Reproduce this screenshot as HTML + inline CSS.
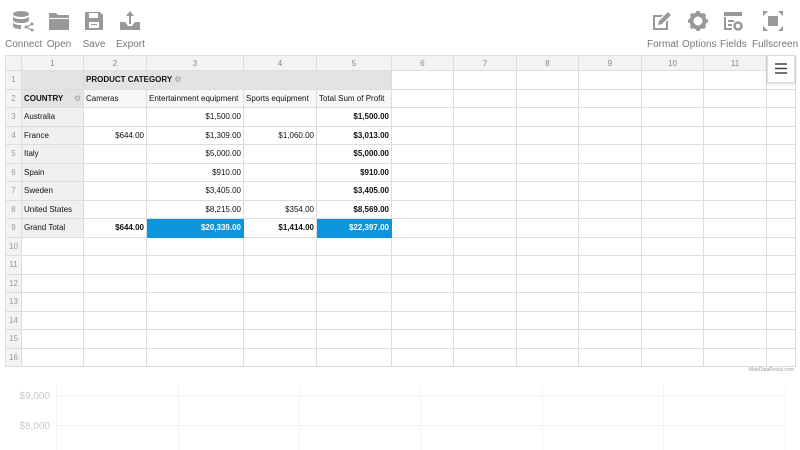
<!DOCTYPE html>
<html><head><meta charset="utf-8"><style>
*{box-sizing:border-box;margin:0;padding:0}
body{width:800px;height:450px;background:#fff;font-family:"Liberation Sans",Arial,sans-serif;position:relative;overflow:hidden;color:#111}
.tb{position:absolute;top:10px;text-align:center;font-size:10px;color:#777}
.tb svg{display:block;margin:0 auto 7px}
table{position:absolute;left:5px;top:55px;width:790px;border-collapse:collapse;table-layout:fixed;font-size:8px}
td{border:1px solid #ddd;height:18.5px;padding:0 2px;white-space:nowrap;overflow:hidden}
tr.h td{height:15px;background:#f3f3f3;color:#888;text-align:center;font-size:8px}
td.n{background:#f3f3f3;color:#999;text-align:center;font-size:8px;padding:0}
td.g{background:#f0f0f0}
td.d{background:#e3e3e3;font-weight:bold}
td.l{background:#f7f7f7}
td.r{text-align:right}
td.b{font-weight:bold;text-align:right}
td.s{background:#0c95dc;color:#fff;font-weight:bold;text-align:right;border-color:#0c95dc}
.gear{color:#999;font-weight:normal}
</style></head><body>
<div class="tb" style="left:5px;width:36px"><svg width="22" height="22" viewBox="0 0 22 22" fill="#999"><ellipse cx="9" cy="4" rx="8" ry="3"/><path d="M1 6c0 2 4 3 8 3s8-1 8-3v4c0 2-4 3-8 3s-8-1-8-3zM1 12c0 2 4 3 8 3v4c-4 0-8-1-8-3z"/><circle cx="14" cy="17" r="1.5"/><circle cx="20" cy="14" r="1.5"/><circle cx="20" cy="20" r="1.5"/><path d="M14 17l6-3M14 17l6 3" stroke="#999" stroke-width="1"/></svg>Connect</div>
<div class="tb" style="left:46px;width:26px"><svg width="22" height="22" viewBox="0 0 22 22" fill="#999"><path d="M1 3h7l2 2h11v3H1z"/><path d="M1 9h20v11H1z"/></svg>Open</div>
<div class="tb" style="left:82px;width:24px"><svg width="22" height="22" viewBox="0 0 22 22" fill="#999"><path d="M2 2h15l3 3v15H2zM6 3v5h9V3zM6 12v6h10v-6z"/><path d="M8 14h6v1H8z"/></svg>Save</div>
<div class="tb" style="left:116px;width:28px"><svg width="22" height="22" viewBox="0 0 22 22" fill="#999"><path d="M11 1l-4 5h3v8h2V6h3z"/><path d="M1 12h5l3 4h4l3-4h5v8H1z"/></svg>Export</div>
<div class="tb" style="left:647px;width:30px"><svg width="22" height="22" viewBox="0 0 22 22" fill="#999"><path d="M2 5h10l-2 2H4v11h11v-6l2-2v10H2z"/><path d="M17 2l3 3-9 9-4 1 1-4z"/></svg>Format</div>
<div class="tb" style="left:682px;width:32px"><svg width="22" height="22" viewBox="0 0 22 22"><circle cx="11" cy="11" r="6.5" fill="none" stroke="#999" stroke-width="4"/><g stroke="#999" stroke-width="3.5"><path d="M11 1v4M11 17v4M1 11h4M17 11h4M4 4l3 3M15 15l3 3M18 4l-3 3M4 18l3-3"/></g></svg>Options</div>
<div class="tb" style="left:720px;width:26px"><svg width="22" height="22" viewBox="0 0 22 22" fill="#999"><path d="M2 2h18v4H2z"/><path d="M2 7h2v11h6v2H2zM6 10h6v2H6zM6 14h4v2H6z"/><circle cx="16" cy="16" r="3.5" fill="none" stroke="#999" stroke-width="2.5"/></svg>Fields</div>
<div class="tb" style="left:752px;width:42px"><svg width="22" height="22" viewBox="0 0 22 22" fill="#999"><path d="M6 6h10v10H6z"/><path d="M1 1h5L1 6zM21 1v5l-5-5zM1 21v-5l5 5zM21 21h-5l5-5z"/></svg>Fullscreen</div>
<table>
<colgroup><col style="width:16px"><col style="width:62px"><col style="width:63px"><col style="width:97px"><col style="width:73px"><col style="width:75px"><col style="width:62px"><col style="width:63px"><col style="width:62px"><col style="width:63px"><col style="width:62px"><col style="width:63px"><col style="width:29px"></colgroup>
<tr class="h"><td></td><td>1</td><td>2</td><td>3</td><td>4</td><td>5</td><td>6</td><td>7</td><td>8</td><td>9</td><td>10</td><td>11</td><td></td></tr>
<tr><td class="n">1</td><td class="d"></td><td class="d" colspan="4">PRODUCT CATEGORY <span class="gear">⚙</span></td><td></td><td></td><td></td><td></td><td></td><td></td><td></td></tr>
<tr><td class="n">2</td><td class="d">COUNTRY <span class="gear" style="float:right">⚙</span></td><td class="l">Cameras</td><td class="l">Entertainment equipment</td><td class="l">Sports equipment</td><td class="l">Total Sum of Profit</td><td></td><td></td><td></td><td></td><td></td><td></td><td></td></tr>
<tr><td class="n">3</td><td class="g">Australia</td><td></td><td class="r">$1,500.00</td><td></td><td class="b">$1,500.00</td><td></td><td></td><td></td><td></td><td></td><td></td><td></td></tr>
<tr><td class="n">4</td><td class="g">France</td><td class="r">$644.00</td><td class="r">$1,309.00</td><td class="r">$1,060.00</td><td class="b">$3,013.00</td><td></td><td></td><td></td><td></td><td></td><td></td><td></td></tr>
<tr><td class="n">5</td><td class="g">Italy</td><td></td><td class="r">$5,000.00</td><td></td><td class="b">$5,000.00</td><td></td><td></td><td></td><td></td><td></td><td></td><td></td></tr>
<tr><td class="n">6</td><td class="g">Spain</td><td></td><td class="r">$910.00</td><td></td><td class="b">$910.00</td><td></td><td></td><td></td><td></td><td></td><td></td><td></td></tr>
<tr><td class="n">7</td><td class="g">Sweden</td><td></td><td class="r">$3,405.00</td><td></td><td class="b">$3,405.00</td><td></td><td></td><td></td><td></td><td></td><td></td><td></td></tr>
<tr><td class="n">8</td><td class="g">United States</td><td></td><td class="r">$8,215.00</td><td class="r">$354.00</td><td class="b">$8,569.00</td><td></td><td></td><td></td><td></td><td></td><td></td><td></td></tr>
<tr><td class="n">9</td><td class="g">Grand Total</td><td class="b">$644.00</td><td class="s">$20,339.00</td><td class="b">$1,414.00</td><td class="s">$22,397.00</td><td></td><td></td><td></td><td></td><td></td><td></td><td></td></tr>
<tr><td class="n">10</td><td></td><td></td><td></td><td></td><td></td><td></td><td></td><td></td><td></td><td></td><td></td><td></td></tr>
<tr><td class="n">11</td><td></td><td></td><td></td><td></td><td></td><td></td><td></td><td></td><td></td><td></td><td></td><td></td></tr>
<tr><td class="n">12</td><td></td><td></td><td></td><td></td><td></td><td></td><td></td><td></td><td></td><td></td><td></td><td></td></tr>
<tr><td class="n">13</td><td></td><td></td><td></td><td></td><td></td><td></td><td></td><td></td><td></td><td></td><td></td><td></td></tr>
<tr><td class="n">14</td><td></td><td></td><td></td><td></td><td></td><td></td><td></td><td></td><td></td><td></td><td></td><td></td></tr>
<tr><td class="n">15</td><td></td><td></td><td></td><td></td><td></td><td></td><td></td><td></td><td></td><td></td><td></td><td></td></tr>
<tr><td class="n">16</td><td></td><td></td><td></td><td></td><td></td><td></td><td></td><td></td><td></td><td></td><td></td><td></td></tr>
</table>
<div style="position:absolute;left:767px;top:55px;width:28px;height:28px;background:#fff;border:1px solid #ddd;box-shadow:0 1px 3px rgba(0,0,0,.15)"><svg width="28" height="28" viewBox="0 0 28 28" style="position:absolute;left:-1px;top:-1px"><path d="M8 9h12M8 13.5h12M8 18h12" stroke="#444" stroke-width="1.5"/></svg></div>
<div style="position:absolute;right:6px;top:367px;font-size:5px;color:#999">WebDataRocks.com</div>
<svg style="position:absolute;left:0;top:380px" width="800" height="70">
<g stroke="#f3f3f3" stroke-width="1"><path d="M56 15.5H786M56 45.5H786"/><path d="M56.5 5V70M178.5 5V70M299.5 5V70M420.5 5V70M542.5 5V70M663.5 5V70M785.5 5V70"/></g>
<text x="50" y="19" text-anchor="end" font-family="Liberation Sans" font-size="10" fill="#c8c8c8">$9,000</text>
<text x="50" y="49" text-anchor="end" font-family="Liberation Sans" font-size="10" fill="#c8c8c8">$8,000</text>
</svg>
</body></html>
